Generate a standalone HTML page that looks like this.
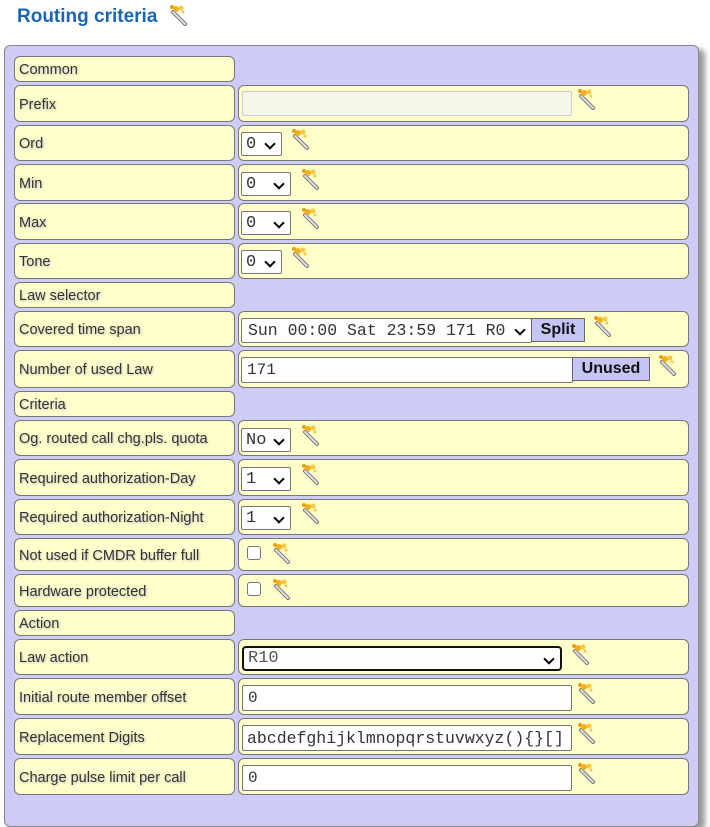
<!DOCTYPE html>
<html><head><meta charset="utf-8"><style>
body{margin:0;width:710px;height:800px;overflow:hidden;background:#fff;font-family:"Liberation Sans",Arial,sans-serif;position:relative}
h1{position:absolute;left:17px;top:6px;margin:0;font-size:19px;color:#1c64b4;font-weight:bold}
.panel{position:absolute;left:4px;top:45px;width:693px;height:780px;background:#ccccf6;border:1px solid #888;border-radius:6px;box-shadow:6px 4px 6px #999}
.c{position:absolute;background:#ffffcc;border:1px solid #777;border-radius:6px;box-sizing:border-box}
.l{font-size:14.5px;color:#333;padding-left:4px;padding-top:2px;display:flex;align-items:center;text-shadow:1px 1px 2px #bbb}
.w{position:absolute}
.in{position:absolute;background:#fff;border:1px solid #767676;border-radius:2px;box-sizing:border-box;font-family:"Liberation Mono","Courier New",monospace;font-size:16px;color:#333;padding-left:5px;display:flex;align-items:center}
.sel{font-size:17px;padding-left:4px}
.sel::after{content:"";position:absolute;right:7px;top:7px;width:6px;height:6px;border-right:2px solid #000;border-bottom:2px solid #000;transform:rotate(45deg)}
.btn{position:absolute;background:#c6c6f6;border:1px solid #666;box-sizing:border-box;font-weight:bold;font-size:16px;display:flex;align-items:center;justify-content:center;color:#111}
.cb{position:absolute;width:14px;height:14px;border:1px solid #777;border-radius:3px;background:#fff;box-sizing:border-box}
</style></head><body>
<svg width="0" height="0" style="position:absolute"><defs><g id="wand"><line x1="5" y1="8" x2="17" y2="20" stroke="#777" stroke-width="4" stroke-linecap="round"/><line x1="5" y1="8" x2="17" y2="20" stroke="#ddd" stroke-width="2" stroke-linecap="round"/><circle cx="8" cy="5" r="3" fill="#f0b020"/><circle cx="13" cy="4" r="2.5" fill="#f5c842"/><circle cx="4" cy="3" r="2" fill="#e8a010"/><circle cx="15" cy="8" r="1.5" fill="#f5c842"/></g></defs></svg>
<h1>Routing criteria</h1>
<svg class="w" style="left:168px;top:4px" width="22" height="22"><use href="#wand"/></svg>
<div class="panel"></div>

<div class="c l" style="left:14px;top:56px;width:221px;height:26px">Common</div>
<div class="c l" style="left:14px;top:85px;width:221px;height:37px">Prefix</div>
<div class="c" style="left:238px;top:85px;width:451px;height:37px"></div>
<div class="in" style="left:242px;top:91px;width:330px;height:25px;background:#f5f5ea;border-color:#ccc"></div>
<svg class="w" style="left:576px;top:88px" width="22" height="22"><use href="#wand"/></svg>

<div class="c l" style="left:14px;top:125px;width:221px;height:36px">Ord</div>
<div class="c" style="left:238px;top:125px;width:451px;height:36px"></div>
<div class="in sel" style="left:241px;top:132px;width:41px;height:24px">0</div>
<svg class="w" style="left:290px;top:128px" width="22" height="22"><use href="#wand"/></svg>

<div class="c l" style="left:14px;top:164px;width:221px;height:37px">Min</div>
<div class="c" style="left:238px;top:164px;width:451px;height:37px"></div>
<div class="in sel" style="left:241px;top:172px;width:50px;height:24px">0</div>
<svg class="w" style="left:300px;top:168px" width="22" height="22"><use href="#wand"/></svg>

<div class="c l" style="left:14px;top:203px;width:221px;height:37px">Max</div>
<div class="c" style="left:238px;top:203px;width:451px;height:37px"></div>
<div class="in sel" style="left:241px;top:211px;width:50px;height:24px">0</div>
<svg class="w" style="left:300px;top:207px" width="22" height="22"><use href="#wand"/></svg>

<div class="c l" style="left:14px;top:243px;width:221px;height:36px">Tone</div>
<div class="c" style="left:238px;top:243px;width:451px;height:36px"></div>
<div class="in sel" style="left:241px;top:250px;width:41px;height:24px">0</div>
<svg class="w" style="left:290px;top:246px" width="22" height="22"><use href="#wand"/></svg>

<div class="c l" style="left:14px;top:282px;width:221px;height:26px">Law selector</div>

<div class="c l" style="left:14px;top:311px;width:221px;height:36px">Covered time span</div>
<div class="c" style="left:238px;top:311px;width:451px;height:36px"></div>
<div class="in sel" style="left:241px;top:318px;width:291px;height:25px;font-size:16.5px;padding-left:6px">Sun 00:00 Sat 23:59 171 R0</div>
<div class="btn" style="left:531px;top:318px;width:54px;height:24px">Split</div>
<svg class="w" style="left:592px;top:315px" width="22" height="22"><use href="#wand"/></svg>

<div class="c l" style="left:14px;top:350px;width:221px;height:38px">Number of used Law</div>
<div class="c" style="left:238px;top:350px;width:451px;height:38px"></div>
<div class="in" style="left:241px;top:357px;width:332px;height:26px">171</div>
<div class="btn" style="left:572px;top:357px;width:78px;height:24px">Unused</div>
<svg class="w" style="left:657px;top:354px" width="22" height="22"><use href="#wand"/></svg>

<div class="c l" style="left:14px;top:391px;width:221px;height:26px">Criteria</div>

<div class="c l" style="left:14px;top:420px;width:221px;height:36px">Og. routed call chg.pls. quota</div>
<div class="c" style="left:238px;top:420px;width:451px;height:36px"></div>
<div class="in sel" style="left:241px;top:428px;width:50px;height:24px">No</div>
<svg class="w" style="left:300px;top:424px" width="22" height="22"><use href="#wand"/></svg>

<div class="c l" style="left:14px;top:459px;width:221px;height:37px">Required authorization-Day</div>
<div class="c" style="left:238px;top:459px;width:451px;height:37px"></div>
<div class="in sel" style="left:241px;top:467px;width:50px;height:24px">1</div>
<svg class="w" style="left:300px;top:463px" width="22" height="22"><use href="#wand"/></svg>

<div class="c l" style="left:14px;top:499px;width:221px;height:36px">Required authorization-Night</div>
<div class="c" style="left:238px;top:499px;width:451px;height:36px"></div>
<div class="in sel" style="left:241px;top:506px;width:50px;height:24px">1</div>
<svg class="w" style="left:300px;top:502px" width="22" height="22"><use href="#wand"/></svg>

<div class="c l" style="left:14px;top:538px;width:221px;height:33px">Not used if CMDR buffer full</div>
<div class="c" style="left:238px;top:538px;width:451px;height:33px"></div>
<div class="cb" style="left:247px;top:546px"></div>
<svg class="w" style="left:271px;top:542px" width="22" height="22"><use href="#wand"/></svg>

<div class="c l" style="left:14px;top:574px;width:221px;height:33px">Hardware protected</div>
<div class="c" style="left:238px;top:574px;width:451px;height:33px"></div>
<div class="cb" style="left:247px;top:582px"></div>
<svg class="w" style="left:271px;top:578px" width="22" height="22"><use href="#wand"/></svg>

<div class="c l" style="left:14px;top:610px;width:221px;height:26px">Action</div>

<div class="c l" style="left:14px;top:639px;width:221px;height:36px">Law action</div>
<div class="c" style="left:238px;top:639px;width:451px;height:36px"></div>
<div class="in sel" style="left:242px;top:646px;width:320px;height:25px;border:2px solid #111;border-radius:4px;color:#555">R10</div>
<svg class="w" style="left:570px;top:643px" width="22" height="22"><use href="#wand"/></svg>

<div class="c l" style="left:14px;top:678px;width:221px;height:37px">Initial route member offset</div>
<div class="c" style="left:238px;top:678px;width:451px;height:37px"></div>
<div class="in" style="left:242px;top:685px;width:330px;height:26px">0</div>
<svg class="w" style="left:576px;top:682px" width="22" height="22"><use href="#wand"/></svg>

<div class="c l" style="left:14px;top:718px;width:221px;height:37px">Replacement Digits</div>
<div class="c" style="left:238px;top:718px;width:451px;height:37px"></div>
<div class="in" style="left:242px;top:725px;width:330px;height:26px;padding-left:4px;font-size:16.5px;overflow:hidden;white-space:nowrap">abcdefghijklmnopqrstuvwxyz(){}[]</div>
<svg class="w" style="left:576px;top:722px" width="22" height="22"><use href="#wand"/></svg>

<div class="c l" style="left:14px;top:758px;width:221px;height:37px">Charge pulse limit per call</div>
<div class="c" style="left:238px;top:758px;width:451px;height:37px"></div>
<div class="in" style="left:242px;top:765px;width:330px;height:26px">0</div>
<svg class="w" style="left:576px;top:762px" width="22" height="22"><use href="#wand"/></svg>
</body></html>
